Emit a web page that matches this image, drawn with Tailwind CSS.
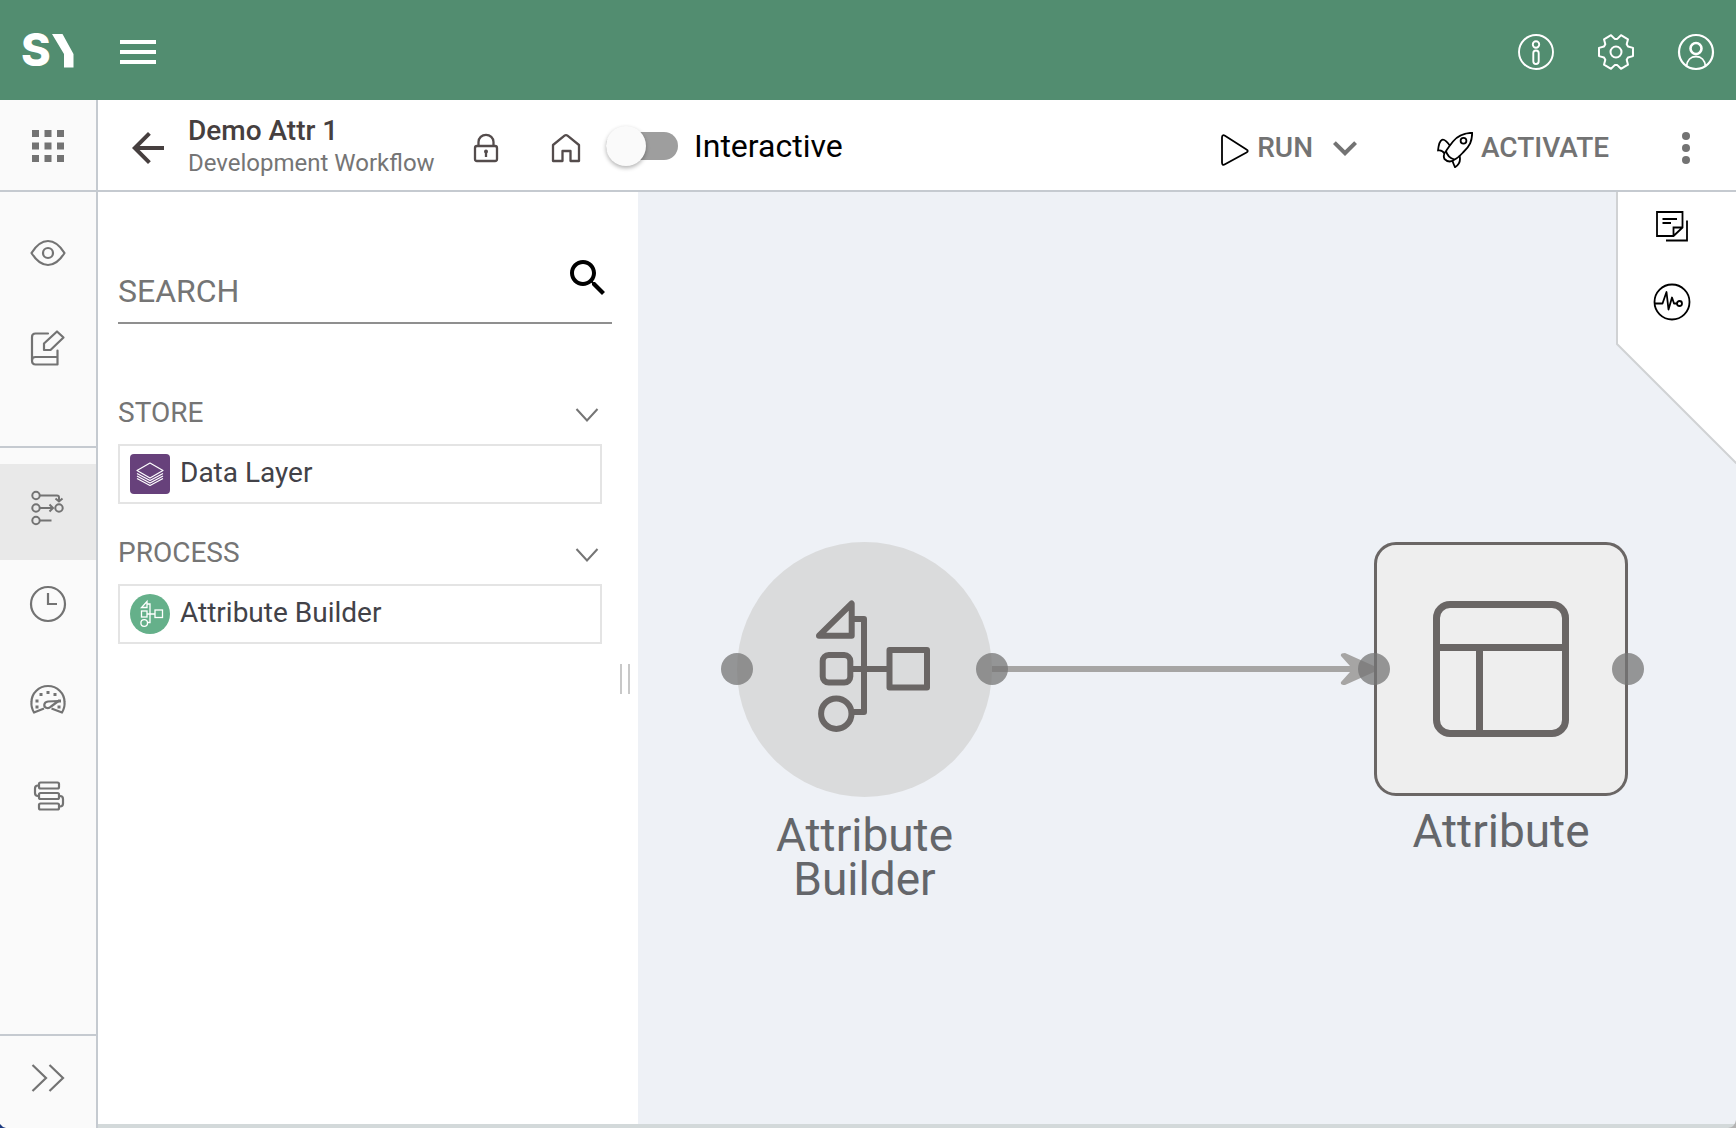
<!DOCTYPE html>
<html lang="en">
<head>
    <meta charset="UTF-8">
    <meta name="viewport" content="width=device-width, initial-scale=1.0">
    <title>Demo Attr 1 - Development Workflow</title>
    <script src="https://cdn.jsdelivr.net/npm/@tailwindcss/browser@4"></script>
</head>
<body class="relative h-screen flex flex-col overflow-hidden bg-white font-['Roboto',sans-serif]">
    <header class="h-[100px] shrink-0 bg-[#528d70] text-white flex items-center pl-5 pr-5">
        <a href="#" aria-label="Home page">
            <svg class="w-14 h-16" viewBox="0 -12 56 64" fill="currentColor">
                <text x="1" y="36" font-family="Inter, sans-serif" font-weight="800" font-size="45">S</text>
                <path d="M32 4h10.500l11 20v13.500h-9.500V24z"/>
            </svg>
        </a>
        <button class="ml-10 p-1" aria-label="Menu">
            <svg class="w-9 h-6 mt-1" viewBox="0 0 36 24" fill="currentColor"><path d="M0 0h36v4H0zM0 10h36v4H0zM0 20h36v4H0z"/></svg>
        </button>
        <div class="ml-auto flex gap-10 mt-1">
            <button aria-label="Info">
                <svg class="size-10" viewBox="-20 -20 40 40" fill="none" stroke="currentColor" stroke-width="1.9">
                    <circle r="17"/><circle cy="-7.500" r="3.200"/><rect x="-2.700" y="-1.500" width="5.400" height="13.500" rx="2.700"/>
                </svg>
            </button>
            <button aria-label="Settings">
                <svg class="size-10" viewBox="-20 -20 40 40" fill="none" stroke="currentColor" stroke-width="2" stroke-linejoin="round">
                    <path d="M17-4.100V4.100L12 5.500 10.700 7.700 12 12.700 5 16.800 1.300 13.100H-1.300L-5 16.800-12 12.700-10.700 7.700-12 5.500-17 4.100V-4.100L-12-5.500-10.700-7.700-12-12.700-5-16.800-1.300-13.100H1.300L5-16.800 12-12.700 10.700-7.700 12-5.500Z"/><circle r="5.500"/>
                </svg>
            </button>
            <button aria-label="Account">
                <svg class="size-10" viewBox="-20 -20 40 40" fill="none" stroke="currentColor" stroke-width="2.2">
                    <circle r="17"/><circle cy="-3.500" r="5.500" stroke-width="2.600"/><path d="M-9.500 14.500C-9 8-5 4.500 0 4.500S9 8 9.500 14.500" stroke-width="1.800"/>
                </svg>
            </button>
        </div>
    </header>

    <div class="flex-1 flex min-h-0">
        <nav class="w-[98px] shrink-0 bg-[#fafafa] border-r-2 border-[#c5cad0] text-[#737373] flex flex-col">
            <a href="#" aria-label="Apps" class="h-[92px] pt-0.5 border-b-2 border-[#c5cad0] flex items-center justify-center">
                <svg class="w-8 h-8" viewBox="0 0 32 32" fill="currentColor">
                    <path d="M0 0h7v7H0zM12.500 0h7v7h-7zM25 0h7v7h-7zM0 12.500h7v7H0zM12.500 12.500h7v7h-7zM25 12.500h7v7h-7zM0 25h7v7H0zM12.500 25h7v7h-7zM25 25h7v7h-7z"/>
                </svg>
            </a>
            <div class="h-64 pt-[17px] border-b-2 border-[#c5cad0]">
                <a href="#" aria-label="View" class="h-24 pb-2 flex items-center justify-center">
                    <svg class="size-10" viewBox="-20 -20 40 40" fill="none" stroke="currentColor" stroke-width="2.200" stroke-linejoin="round">
                        <path d="M-16.500 0C-11.500-8-6.500-12 0-12S11.500-8 16.500 0C11.500 8 6.500 12 0 12S-11.500 8-16.500 0Z"/><circle r="5"/>
                    </svg>
                </a>
                <a href="#" aria-label="Edit" class="h-24 pb-2 flex items-center justify-center">
                    <svg class="size-10" viewBox="-20 -20 40 40" fill="none" stroke="currentColor" stroke-width="2.200" stroke-linejoin="round" stroke-linecap="round">
                        <path d="M0-15.500H-12.500Q-16-15.500-16-12V11.500Q-16 15.500-12.500 15.500H9.500V1.500M9.500 8H-12.500Q-16 8-16 11.500"/>
                        <path d="M-4 1V-5.500L9-17.500 15.500-11.500 2.500 1Z"/>
                    </svg>
                </a>
            </div>
            <div class="pt-4">
                <a href="#" aria-label="Workflows" aria-current="page" class="h-24 pb-2 flex items-center justify-center bg-[#e9e9e9]">
                    <svg class="size-10" viewBox="-20 -20 40 40" fill="none" stroke="currentColor" stroke-width="2">
                        <circle cx="-12" cy="-12.500" r="3.700"/><circle cx="-12" cy="0" r="3.700"/><circle cx="-12" cy="12.500" r="3.700"/><circle cx="11" cy="0" r="3.700"/>
                        <path d="M-8-12.500H9Q11-12.500 11-10.500V-7M7.500-9.500 11-6.500 14.500-9.500M-8 0H4.500M1.500-3.500 5 0 1.500 3.500M-8 12.500H3.500"/>
                    </svg>
                </a>
                <a href="#" aria-label="Schedule" class="h-24 pb-2 flex items-center justify-center">
                    <svg class="size-10" viewBox="-20 -20 40 40" fill="none" stroke="currentColor" stroke-width="2.200">
                        <circle r="17"/><path d="M0-11V0H9"/>
                    </svg>
                </a>
                <a href="#" aria-label="Dashboard" class="h-24 pb-2 flex items-center justify-center">
                    <svg class="size-10" viewBox="-20 -20 40 40" fill="none" stroke="currentColor" stroke-width="2.200" stroke-linejoin="round">
                        <path d="M-4 8.500-14 12.500C-16 9-17 6-16.500 2A16.500 16 0 0 1 16.500 2C17 6 16 9 14 12.500L3.500 8.500"/>
                        <path d="M10.500 1 0 1.500C-4.500 2-5 7-1 8 1 8.500 2.500 7 3 6.500Z"/>
                        <path d="M-12.500 7h3M-12.500 1h3M-8.500-5.500h3M-1.500-7.500h3M5.500-5.500h3M10 1h3M9.500 7h3" stroke-width="3"/>
                    </svg>
                </a>
                <a href="#" aria-label="Data pipelines" class="h-24 pb-2 flex items-center justify-center">
                    <svg class="size-10" viewBox="-20 -20 40 40" fill="none" stroke="currentColor" stroke-width="2.200">
                        <rect x="-9" y="-13.500" width="20" height="6" rx="1.500"/><rect x="-9" y="-3" width="20" height="6" rx="1.500"/><rect x="-9" y="7.500" width="20" height="6" rx="1.500"/>
                        <path d="M-9-10.500H-10Q-13-10.500-13-7.500V-3Q-13 0-10 0H-9M11 0H12Q15 0 15 3V7.500Q15 10.500 12 10.500H11"/>
                    </svg>
                </a>
            </div>
            <button aria-label="Expand" class="mt-auto h-[94px] pb-2 border-t-2 border-[#c5cad0] flex items-center justify-center">
                <svg class="size-10" viewBox="-20 -20 40 40" fill="none" stroke="currentColor" stroke-width="2.200">
                    <path d="M-15.500-13-2 0-15.500 13M1.500-13 15 0 1.500 13"/>
                </svg>
            </button>
        </nav>

        <div class="flex-1 min-w-0 flex flex-col border-b-4 border-[#d3d9da]">
            <div class="h-[92px] shrink-0 border-b-2 border-[#c5cad0] flex items-center pl-[26px] pr-[26px] pt-1.5">
                <button aria-label="Back" class="text-[#463f3f]">
                    <svg class="size-12" viewBox="0 0 24 24" fill="currentColor"><path d="M20 11H7.830l5.590-5.590L12 4l-8 8 8 8 1.410-1.410L7.830 13H20v-2z"/></svg>
                </button>
                <div class="ml-4 w-64 pb-0.5 whitespace-nowrap">
                    <h1 class="text-[28px] leading-8 font-medium text-[#463f3f]">Demo Attr 1</h1>
                    <p class="text-[24px] leading-8 text-[#757575]">Development Workflow</p>
                </div>
                <button aria-label="Lock" class="ml-[18px] text-[#544c4c]">
                    <svg class="size-12" viewBox="-24 -24 48 48" fill="none" stroke="currentColor" stroke-width="2.300">
                        <rect x="-11" y="-2" width="22" height="15" rx="2"/><path d="M-7.500-2V-6A7.500 7.200 0 0 1 7.500-6V-2"/>
                        <circle cy="3.500" r="2" fill="currentColor" stroke="none"/><path d="M0 4V9"/>
                    </svg>
                </button>
                <a href="#" aria-label="Home" class="ml-8 text-[#544c4c]">
                    <svg class="size-12" viewBox="-24 -24 48 48" fill="none" stroke="currentColor" stroke-width="2.300" stroke-linejoin="round">
                        <path d="M-13 13V-3L-1.500-12.300Q0-13.500 1.500-12.300L13-3V13H4.500V3H-3.500V13Z"/>
                    </svg>
                </a>
                <label class="ml-4 pb-1 flex items-center gap-4 text-[32px] leading-10 text-black">
                    <input type="checkbox" class="appearance-none relative w-[72px] h-7 rounded-full bg-[#9e9e9e] before:absolute before:left-0 before:-top-1.5 before:size-10 before:rounded-full before:bg-[#fafafa] before:shadow-[0_2px_4px_rgba(0,0,0,0.3)]">
                    Interactive
                </label>

                <button class="ml-auto flex items-center text-[28px] font-medium text-[#737373]">
                    <svg class="w-9 h-10 mr-1 mt-1" viewBox="0 0 36 40" fill="none" stroke="#000" stroke-width="1.800">
                        <path d="M5 7.500V32.500Q5 36 8 34.300L29.500 22.500Q32 21 29.500 19.500L8 5.700Q5 4.200 5 7.500Z"/>
                    </svg>
                    RUN
                </button>
                <button aria-label="Run options" class="ml-2 text-[#737373]">
                    <svg class="size-12" viewBox="0 0 24 24" fill="currentColor"><path d="M16.590 8.590 12 13.170 7.410 8.590 6 10l6 6 6-6z"/></svg>
                </button>
                <button class="ml-17 w-[177px] flex items-center gap-2 text-[28px] font-medium text-[#737373]">
                    <svg class="size-9 mt-1 shrink-0" viewBox="0 0 36 36" fill="none" stroke="#000" stroke-width="1.800" stroke-linejoin="round">
                        <path d="M35.200.800C25 1 20 4.500 16 9.500Q12 14.500 9 19Q5.500 23 7.500 27Q12 31.500 16.800 28Q21 26 26 20.500C33 14 35 9 35.200.800Z"/>
                        <path d="M9 19Q10.500 25.500 17.500 27.500M13 13.800Q3-.500 1 18.500 5 17.500 7.500 21.500"/>
                        <path d="M22.500 23.500C24 29 21.500 33 18 35.200Q16.500 32 15.500 29"/>
                        <circle cx="26.500" cy="8.800" r="2.900"/>
                    </svg>
                    ACTIVATE
                </button>
                <button aria-label="More" class="ml-12 text-[#737373]">
                    <svg class="size-12" viewBox="0 0 24 24" fill="currentColor"><circle cx="12" cy="6" r="2"/><circle cx="12" cy="12" r="2"/><circle cx="12" cy="18" r="2"/></svg>
                </button>
            </div>

            <main class="flex-1 min-h-0 flex">
                <aside class="w-[540px] shrink-0 flex">
                    <div class="flex-1 pl-5">
                        <div class="mt-12 h-[84px] border-b-2 border-[#8f8f8f] flex">
                            <input type="search" placeholder="SEARCH" aria-label="Search" class="flex-1 min-w-0 mt-5 text-[32px] text-black outline-none placeholder:text-[#757575]">
                            <button aria-label="Search" class="self-start mt-3.5">
                                <svg class="size-12" viewBox="0 0 24 24" fill="currentColor"><path d="M15.500 14h-.79l-.28-.27C15.410 12.590 16 11.110 16 9.500 16 5.910 13.090 3 9.500 3S3 5.910 3 9.500 5.910 16 9.500 16c1.610 0 3.090-.59 4.230-1.570l.27.280v.79l5 4.990L20.490 19l-4.990-5zm-6 0C7.010 14 5 11.990 5 9.500S7.010 5 9.500 5 14 7.010 14 9.500 11.990 14 9.500 14z"/></svg>
                            </button>
                        </div>
                        <section class="mt-10 pr-[10px]">
                            <button class="w-full h-20 pt-[18px] pr-[3px] flex items-center justify-between text-[28px] text-[#757575]">
                                STORE
                                <svg class="w-6 h-4 mt-1" viewBox="0 0 24 16" fill="none" stroke="currentColor" stroke-width="2"><path d="M1.500 2 12 13.500 22.500 2"/></svg>
                            </button>
                            <a href="#" class="h-[60px] border-2 border-[#e4e4e4] pl-2.5 flex items-center gap-2.5 text-[28px] text-[#424248]">
                                <span class="size-10 rounded bg-[#67417b] flex items-center justify-center">
                                    <svg class="size-7" viewBox="0 0 28 28" fill="none" stroke="#fff" stroke-width="1.200" stroke-linejoin="round">
                                        <path d="M14 3 27 10.500 14 18 1 10.500ZM1 13.500 14 20.500 27 13.500M1 16 14 23 27 16M1 18.500 14 25.500 27 18.500"/>
                                    </svg>
                                </span>
                                <span class="pb-0.5">Data Layer</span>
                            </a>
                        </section>
                        <section class="pr-[10px]">
                            <button class="w-full h-20 pt-[18px] pr-[3px] flex items-center justify-between text-[28px] text-[#757575]">
                                PROCESS
                                <svg class="w-6 h-4 mt-1" viewBox="0 0 24 16" fill="none" stroke="currentColor" stroke-width="2"><path d="M1.500 2 12 13.500 22.500 2"/></svg>
                            </button>
                            <a href="#" class="h-[60px] border-2 border-[#e4e4e4] pl-2.5 flex items-center gap-2.5 text-[28px] text-[#424248]">
                                <span class="size-10 rounded-full bg-[#65b08a] flex items-center justify-center">
                                    <svg class="size-10" viewBox="0 0 40 40" fill="none" stroke="#fff" stroke-width="1.300">
                                        <path d="M17 7.500V13.500H11.500ZM17 10H20V28.500H17.500M17 20H25"/><rect x="11.500" y="17" width="5.500" height="6"/><rect x="25" y="16" width="7.500" height="7.500"/><circle cx="14.200" cy="29" r="3.300"/>
                                    </svg>
                                </span>
                                <span class="pb-0.5">Attribute Builder</span>
                            </a>
                        </section>
                    </div>
                    <div class="w-[26px] flex items-center justify-center gap-1.5 pt-[42px]">
                        <span class="w-0.5 h-[30px] bg-[#c8c8c8]"></span>
                        <span class="w-0.5 h-[30px] bg-[#c8c8c8]"></span>
                    </div>
                </aside>

                <div class="flex-1 min-w-0 relative bg-[#eef1f6] overflow-hidden text-[46px] leading-[44px] text-[#64666a] text-center">
                    <!-- nodes -->
                    <div class="absolute left-[99px] top-[350px] w-[255px]">
                        <div class="size-[255px] rounded-full bg-[#dadbdc]">
                            <svg class="size-full" viewBox="0 0 255 255" fill="none" stroke="#6a6665" stroke-width="6" stroke-linejoin="round">
                                <g transform="translate(79 58)">
                                    <path d="M35.700 3.500V35.700H3ZM38 19H48V112H37M37 69H73"/>
                                    <rect x="6.700" y="55" width="27.600" height="27.600" rx="6"/><rect x="73.500" y="50" width="37.500" height="37.500"/><circle cx="20.300" cy="113.700" r="15.200"/>
                                </g>
                            </svg>
                        </div>
                        <p class="mt-4">Attribute Builder</p>
                    </div>
                    <div class="absolute left-[736px] top-[350px] w-[254px]">
                        <div class="size-[254px] rounded-[22px] border-3 border-[#6a6665] bg-[#eeeeee] flex items-center justify-center">
                            <svg class="w-[136px] h-[136px]" viewBox="0 0 136 136" fill="none" stroke="#6a6665" stroke-width="7">
                                <rect x="3.500" y="3.500" width="129" height="129" rx="13.500"/><path d="M3.500 46.500H132.500M46.500 46.500V132.500"/>
                            </svg>
                        </div>
                        <p class="mt-[13px]">Attribute</p>
                    </div>
                    <!-- edge and ports -->
                    <svg class="absolute left-[83px] top-[461px] w-[924px] h-8" viewBox="0 0 924 32">
                        <path d="M271 13H629L620 3Q619 0 624 0L653 13V19L624 32Q619 32 620 29L629 19H271Z" fill="#a6a5a4"/>
                        <g fill="#757575" fill-opacity="0.750">
                            <circle cx="16" cy="16" r="16"/><circle cx="271" cy="16" r="16"/><circle cx="653" cy="16" r="16"/><circle cx="907" cy="16" r="16"/>
                        </g>
                    </svg>
                    <!-- side tools -->
                    <div class="absolute right-0 top-0 w-[120px] h-[272px]">
                        <svg class="absolute inset-0" viewBox="0 0 120 272"><path d="M1-2V152L121 272V-2Z" fill="#fff" stroke="#d0d2d4" stroke-width="2"/></svg>
                        <div class="relative flex flex-col items-center pt-3.5 pr-2 gap-9 text-black">
                            <button aria-label="Notes">
                                <svg class="size-10" viewBox="-20 -20 40 40" fill="none" stroke="currentColor" stroke-width="1.800">
                                    <path d="M1.500 10H-15V-14H10.500V1.500ZM10.500 1.500H1.500V10M-9.500-7H5M-9.500-3H-1M15-5.500V14.500H-6"/>
                                </svg>
                            </button>
                            <button aria-label="Activity">
                                <svg class="size-10" viewBox="-20 -20 40 40" fill="none" stroke="currentColor" stroke-width="1.800" stroke-linejoin="round">
                                    <circle r="17.500"/><path d="M-17.500 1.500H-9.500L-5.500-10-3.500 7.500 0-4.500 2 1.500H5"/><circle cx="7.500" cy="1.500" r="2.500"/>
                                </svg>
                            </button>
                        </div>
                    </div>
                </div>
            </main>
        </div>
    </div>

    <!-- window corners -->
    <svg class="absolute left-0 bottom-0 w-1.5 h-1" viewBox="0 0 6 4"><path d="M0 0Q2 3 6 4H0Z" fill="#1b3a80"/></svg>
    <svg class="absolute right-0 bottom-0 size-2" viewBox="0 0 8 8"><path d="M8 0Q7 7 0 8H8Z" fill="#b3b3b3"/></svg>
</body>
</html>
